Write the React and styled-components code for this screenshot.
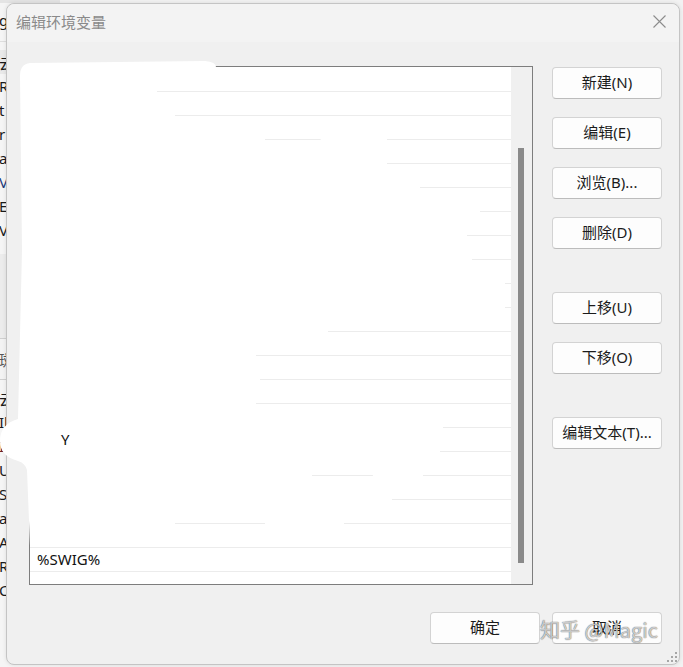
import React from 'react';
import styled, { createGlobalStyle } from 'styled-components';

const Global = createGlobalStyle`
  html, body { margin: 0; padding: 0; }
  body {
    width: 683px; height: 667px; overflow: hidden; background: #ececec;
    font-family: "Noto Sans", "Noto Sans CJK SC", sans-serif;
  }
`;

const Desktop = styled.div`
  position: relative; width: 683px; height: 667px; overflow: hidden; background: #f2f2f2;
`;

/* ---------- window behind the dialog (only a sliver shows) ---------- */
const BackWindow = styled.div`
  position: absolute; left: 0; top: 0; width: 60px; height: 667px;
  background: #f5f5f5; display: flex; flex-direction: column;
  border-top: 3px solid #e4e4e4; box-sizing: border-box;
`;
const BackHead = styled.div`
  height: 39px; display: flex; align-items: center; padding-bottom: 4px; box-sizing: border-box;
  border-bottom: 1px solid #dedede;
`;
const BackList = styled.div`
  display: flex; flex-direction: column; margin-top: ${p => p.$top}px;
`;
const BackRow = styled.div`
  height: 24px; display: flex; align-items: center; margin-left: -1px;
  font-size: 15px; color: ${p => p.$color || '#1a1a1a'}; background: ${p => p.$bg || 'transparent'};
`;
const BackBand = styled.div`
  height: ${p => p.$h}px; background: ${p => p.$bg}; border-bottom: 1px solid #cfcfcf;
  margin-top: ${p => p.$top || 0}px;
  display: flex; align-items: center; margin-left: -1px; font-size: 15px; color: #555;
  box-sizing: border-box;
`;

/* ---------- dialog ---------- */
const Dialog = styled.section`
  position: absolute; left: 6px; top: 3px; z-index: 1;
  width: 674px; height: 662px; box-sizing: border-box;
  border: 1px solid #c4c4c4; border-radius: 8px; background: #f0f0f0;
  display: flex; flex-direction: column;
  box-shadow: 0 0 4px rgba(0, 0, 0, 0.1);
`;
const TitleBar = styled.header`
  height: 38px; box-sizing: border-box; padding: 0 13px 4px 9px;
  display: flex; align-items: center; justify-content: space-between;
  background: #f3f3f3; border-radius: 8px 8px 0 0;
`;
const Title = styled.span`
  font-family: "Noto Sans CJK SC", sans-serif; font-size: 15px; color: #8a8a8a; line-height: 1;
`;
const Body = styled.div`
  display: grid; grid-template-columns: 504px 110px; column-gap: 19px;
  padding: 24px 17px 0 22px;
`;
const ListBox = styled.div`
  height: 519px; box-sizing: border-box; border: 1px solid #7d7d7d; background: #fff;
  display: grid; grid-template-columns: 1fr 21px; overflow: hidden;
`;
const Rows = styled.div`
  display: flex; flex-direction: column; padding-top: 1px; overflow: hidden;
`;
const Row = styled.div`
  flex: 0 0 24px; box-sizing: border-box; border-bottom: 1px solid #ececec;
  display: flex; align-items: center; padding-left: 7px;
  font-size: 15px; color: #111; white-space: nowrap;
`;
const Frag = styled.span`
  position: relative; z-index: 3; margin-left: ${p => p.$x || 0}px; line-height: 1;
`;
const Track = styled.div`
  background: #f0f0f0; display: flex; flex-direction: column; padding: 81px 0 0 7px;
`;
const Thumb = styled.div`
  width: 6px; height: 415px; background: #8a8a8a;
`;
const Side = styled.div`
  display: flex; flex-direction: column; gap: 18px; padding-top: 1px;
`;
const Button = styled.button`
  width: 110px; height: 32px; box-sizing: border-box; margin: 0;
  margin-top: ${p => (p.$push ? 25 : 0)}px;
  background: #fdfdfd; border: 1px solid #d3d3d3; border-bottom-color: #bcbcbc; border-radius: 4px;
  font-family: "Noto Sans", "Noto Sans CJK SC", sans-serif; font-size: 15px; color: #1b1b1b;
  display: flex; align-items: center; justify-content: center; padding: 0 0 1px; line-height: 1;
`;
const Footer = styled.div`
  display: flex; justify-content: flex-end; gap: 12px; margin-top: 27px; padding-right: 17px;
`;
const Blob = styled.svg`
  position: absolute; left: -7px; top: -4px; z-index: 2; pointer-events: none;
`;
const Grip = styled.svg`
  position: absolute; right: 1px; bottom: 1px;
`;
const Watermark = styled.div`
  position: absolute; left: 540px; top: 616px; z-index: 5;
  font-family: "Noto Sans CJK SC", sans-serif; font-size: 20px; line-height: 28px;
  color: rgba(255, 255, 255, 0.7); white-space: nowrap;
  text-shadow: 0 0 1px rgba(0, 0, 0, 0.55), 0 0 1px rgba(0, 0, 0, 0.4);
`;

const blobPath = `
M 30 63 L 205 61 Q 216 62 216 67
L 200 80 L 157 89 L 157 93 L 175 100 L 175 117
L 265 128 L 265 141 L 320 141 L 322 136 L 387 136 L 387 165
L 420 175 L 420 189 L 480 200 L 480 213 L 467 224 L 467 237
L 472 248 L 472 261 L 505 272 L 505 309 L 328 320 L 328 333
L 256 344 L 256 357 L 260 368 L 260 381 L 256 392 L 256 405
L 443 416 L 443 429 L 440 440 L 440 453 L 312 464 L 312 477
L 372 477 L 375 472 L 423 472 L 423 488 L 392 490 L 392 501
L 344 512 L 344 525 L 265 525 L 265 520 L 175 520 L 175 530
L 160 541 Q 90 547 30 546
L 27 470 Q 25 463 18 461 Q 0 456 0 441 Q 0 424 18 419
L 22 250 L 20 76 Q 20 64 30 63 Z`;

const backTop = ['云', 'R', 't', 'r', 'a', 'V', 'E', 'V'];
const backBottom = [
  ['云'], ['Il'], ['I', '#6b1f1f'], ['U'], ['S'], ['a'], ['A'], ['R'], ['C'],
];

export default function App() {
  const rows = Array.from({ length: 22 });
  return (
    <>
      <Global />
      <Desktop>
        <BackWindow>
          <BackHead><BackRow>g</BackRow></BackHead>
          <BackList $top={8}>
            {backTop.map((c, i) => (
              <BackRow key={i} $bg={i === 0 ? '#e9e9e9' : undefined} $color={i === 5 ? '#1f3b7a' : undefined}>{c}</BackRow>
            ))}
          </BackList>
          <BackBand $h={85} $bg="#ececec" $top={12} />
          <BackBand $h={41} $bg="#f3f3f3">斑</BackBand>
          <BackList $top={6}>
            {backBottom.map(([c, col], i) => (
              <BackRow key={i} $color={col}>{c}</BackRow>
            ))}
          </BackList>
        </BackWindow>

        <Dialog>
          <TitleBar>
            <Title>编辑环境变量</Title>
            <svg width="13" height="13" viewBox="0 0 13 13">
              <path d="M0.5 0.5 L12.5 12.5 M12.5 0.5 L0.5 12.5" stroke="#8c8c8c" strokeWidth="1.1" fill="none" />
            </svg>
          </TitleBar>
          <Body>
            <ListBox>
              <Rows>
                {rows.map((_, i) => (
                  <Row key={i}>
                    {i === 15 && <Frag $x={24}>Y</Frag>}
                    {i === 20 && <Frag>%SWIG%</Frag>}
                  </Row>
                ))}
              </Rows>
              <Track><Thumb /></Track>
            </ListBox>
            <Side>
              <Button>新建(N)</Button>
              <Button>编辑(E)</Button>
              <Button>浏览(B)...</Button>
              <Button>删除(D)</Button>
              <Button $push>上移(U)</Button>
              <Button>下移(O)</Button>
              <Button $push>编辑文本(T)...</Button>
            </Side>
          </Body>
          <Footer>
            <Button>确定</Button>
            <Button>取消</Button>
          </Footer>
          <Blob width="683" height="667" viewBox="0 0 683 667">
            <path d={blobPath} fill="#ffffff" />
          </Blob>
          <Grip width="12" height="12" viewBox="0 0 12 12">
            <g fill="#a6a6a6">
              <rect x="9" y="1" width="2" height="2" />
              <rect x="5" y="5" width="2" height="2" />
              <rect x="9" y="5" width="2" height="2" />
              <rect x="1" y="9" width="2" height="2" />
              <rect x="5" y="9" width="2" height="2" />
              <rect x="9" y="9" width="2" height="2" />
            </g>
          </Grip>
        </Dialog>

        <Watermark>知乎 @Magic</Watermark>
      </Desktop>
    </>
  );
}
